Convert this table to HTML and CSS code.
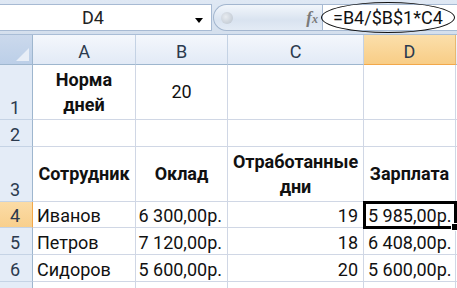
FILE: index.html
```html
<!DOCTYPE html>
<html lang="ru">
<head>
<meta charset="utf-8">
<title>Excel</title>
<link rel="stylesheet" href="styles.css">
</head>
<body>
<div class="app">
  <div class="fbar">
    <div class="namebox"><span class="ref">D4</span><span class="arrow"></span></div>
    <div class="pill"><span class="knob"></span><span class="fx">f<span class="fx-x">x</span></span></div>
    <div class="formula">=B4/$B$1*C4</div>
    <div class="ring"></div>
  </div>
  <div class="sheet">
    <div class="corner"><span class="tri"></span></div>
    <div class="ch">A</div>
    <div class="ch">B</div>
    <div class="ch">C</div>
    <div class="ch ch-sel">D</div>
    <div class="ch ch-e"></div>

    <div class="rh">1</div>
    <div class="c mid bold wrap">Норма<br>дней</div>
    <div class="c mid">20</div>
    <div class="c"></div>
    <div class="c"></div>
    <div class="c"></div>

    <div class="rh">2</div>
    <div class="c"></div>
    <div class="c"></div>
    <div class="c"></div>
    <div class="c"></div>
    <div class="c"></div>

    <div class="rh">3</div>
    <div class="c mid bold">Сотрудник</div>
    <div class="c mid bold">Оклад</div>
    <div class="c mid bold wrap">Отработанные<br>дни</div>
    <div class="c mid bold">Зарплата</div>
    <div class="c"></div>

    <div class="rh rh-sel">4</div>
    <div class="c">Иванов</div>
    <div class="c num">6 300,00р.</div>
    <div class="c num">19</div>
    <div class="c sel">5 985,00р.</div>
    <div class="c"></div>

    <div class="rh">5</div>
    <div class="c">Петров</div>
    <div class="c num">7 120,00р.</div>
    <div class="c num">18</div>
    <div class="c">6 408,00р.</div>
    <div class="c"></div>

    <div class="rh">6</div>
    <div class="c">Сидоров</div>
    <div class="c num">5 600,00р.</div>
    <div class="c num">20</div>
    <div class="c">5 600,00р.</div>
    <div class="c"></div>

    <div class="rh rh-last"></div>
    <div class="c c-last"></div>
    <div class="c c-last"></div>
    <div class="c c-last"></div>
    <div class="c c-last"></div>
    <div class="c c-last"></div>
  </div>
</div>
</body>
</html>
```
FILE: styles.css
```css
* { box-sizing: border-box; margin: 0; padding: 0; }
html, body { width: 457px; height: 288px; overflow: hidden; background: #fff; }
body { font-family: Roboto, "Noto Sans", sans-serif; color: #111; }

.app { width: 457px; height: 288px; display: flex; flex-direction: column; overflow: hidden; }

.fbar {
  position: relative;
  height: 35px;
  flex: none;
  display: flex;
  padding: 4px 0 3px 0;
  background: linear-gradient(#dfe8f4, #d4dfed);
  border-bottom: 1px solid #a9bdd6;
}
.namebox {
  width: 212px;
  background: #fff;
  border: 1px solid #a7bad3;
  border-left: none;
  display: flex;
  align-items: center;
  position: relative;
}
.ref { font-size: 18px; width: 186px; text-align: center; color: #222; }
.arrow {
  position: absolute; right: 8px; top: 13px;
  width: 0; height: 0;
  border-left: 4px solid transparent;
  border-right: 4px solid transparent;
  border-top: 5px solid #000;
}
.pill {
  flex: 1;
  margin-left: 1px;
  border: 1px solid #a3b6cf;
  border-right: none;
  border-radius: 14px 0 0 14px;
  background: linear-gradient(#f2f6fb, #d9e3f0 60%, #e3ebf5);
  display: flex;
  align-items: center;
  justify-content: space-between;
  padding: 0 4px 0 7px;
}
.knob {
  width: 12px; height: 12px; border-radius: 50%;
  background: radial-gradient(circle at 40% 40%, #e8ecf1, #b9c2cd);
}
.fx {
  font-family: "Liberation Serif", serif;
  font-style: italic;
  font-weight: bold;
  font-size: 17px;
  color: #7a7a7a;
}
.fx-x { font-size: 12px; }
.formula {
  width: 135px;
  background: #fff;
  border: 1px solid #a7bad3;
  border-right: none;
  font-size: 18px;
  display: flex;
  align-items: center;
  padding-left: 10px;
  color: #111;
}
.ring {
  position: absolute;
  left: 321px; top: 2px;
  width: 134px; height: 31px;
  border: 1.5px solid #111;
  border-radius: 50%;
}

.sheet {
  flex: 1;
  min-height: 0;
  overflow: hidden;
  display: grid;
  grid-template-columns: 33px 103px 92px 136px 92px 1fr;
  grid-template-rows: 30px 55px 27px 55px 26px 27px 27px 1fr;
}
.corner {
  background: linear-gradient(#cbd9ec, #bccfe8);
  border-right: 1px solid #9eb6ce;
  border-bottom: 1px solid #9eb6ce;
  position: relative;
}
.tri {
  position: absolute; right: 3px; bottom: 3px;
  width: 0; height: 0;
  border-left: 13px solid transparent;
  border-bottom: 13px solid #e8eef7;
}
.ch {
  background: linear-gradient(#f4f7fc, #e2eaf6);
  border-right: 1px solid #c4d2e4;
  border-bottom: 1px solid #9eb6ce;
  font-size: 18px;
  color: #2b3a4e;
  display: flex; align-items: center; justify-content: center;
  padding-top: 3px;
}
.ch-sel {
  background: linear-gradient(#fbdfab, #f8cd86);
  border-bottom: 1px solid #f2a84a;
  border-right: 1px solid #e9b870;
}
.rh {
  background: #e4ecf7;
  border-right: 1px solid #9eb6ce;
  border-bottom: 1px solid #c5d3e5;
  font-size: 18px;
  color: #2b3a4e;
  display: flex; align-items: flex-end; justify-content: center;
  line-height: 22px;
  padding-right: 2px;
}
.rh-sel {
  background: linear-gradient(#fbdca6, #f8cf8d);
  border-right: 1px solid #f2a84a;
}
.c {
  border-right: 1px solid #d0d7e5;
  border-bottom: 1px solid #d0d7e5;
  font-size: 18px;
  line-height: 22px;
  display: flex;
  align-items: flex-end;
  padding: 0 5px 0 4px;
  white-space: nowrap;
}
.rh-last, .c-last { border-bottom: none; }
.mid { align-items: center; justify-content: center; text-align: center; padding: 0; }
.wrap { line-height: 25px; }
.bold { font-weight: bold; }
.num { justify-content: flex-end; }
.sel {
  position: relative;
  z-index: 1;
  outline: 3px solid #000;
  outline-offset: -2px;
}
.sel::after {
  content: "";
  position: absolute;
  right: -4px; bottom: -4px;
  width: 6px; height: 6px;
  background: #000;
  border: 1px solid #fff;
}
```
